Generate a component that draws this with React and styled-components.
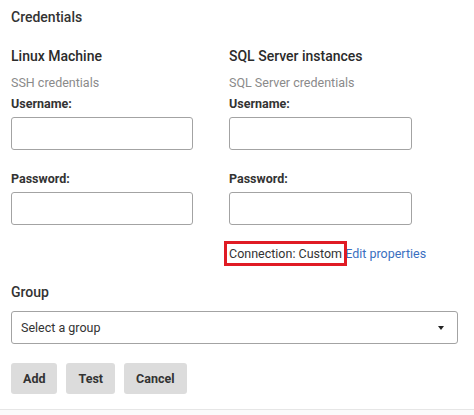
import React from "react";
import styled, { createGlobalStyle } from "styled-components";

const Global = createGlobalStyle`
  html, body { margin: 0; padding: 0; background: #fff; }
  body { font-family: Roboto, "Liberation Sans", Arial, sans-serif; color: #333; }
  * { box-sizing: border-box; }
`;

const Page = styled.div`
  width: 474px;
  height: 415px;
  overflow: hidden;
  display: flex;
  flex-direction: column;
`;

const Content = styled.div`
  padding: 7px 11px 0 11px;
  display: flex;
  flex-direction: column;
`;

const Title = styled.div`
  font-size: 14px;
  font-weight: 500;
  line-height: 20px;
  color: #333;
`;

const Columns = styled.div`
  display: grid;
  grid-template-columns: 182px 183px;
  column-gap: 36px;
  margin-top: 19px;
`;

const Column = styled.div`
  display: flex;
  flex-direction: column;
`;

const Heading = styled.div`
  font-size: 14px;
  font-weight: 500;
  line-height: 20px;
  color: #2b2b2b;
`;

const Sub = styled.div`
  font-size: 12.5px;
  line-height: 16px;
  color: #8a8a8a;
  margin-top: 9px;
`;

const Label = styled.label`
  display: block;
  font-size: 12.5px;
  font-weight: 700;
  line-height: 16px;
  color: #333;
  margin-top: ${(p) => p.$top}px;
`;

const Input = styled.input`
  display: block;
  width: 100%;
  height: 33px;
  margin-top: 5px;
  border: 1px solid #a3a3a3;
  border-radius: 3px;
  background: #fff;
  font: inherit;
  padding: 0 8px;
  outline: none;
`;

const ConnRow = styled.div`
  margin-top: 21px;
  font-size: 12.5px;
  line-height: 16px;
  white-space: nowrap;
`;

const Highlight = styled.span`
  color: #333;
  outline: 3px solid #e01b24;
  outline-offset: 2px;
`;

const Link = styled.a`
  color: #3a6fbf;
  text-decoration: none;
`;

const GroupLabel = styled.div`
  margin-top: 20px;
  font-size: 14px;
  font-weight: 500;
  line-height: 20px;
  color: #333;
`;

const Select = styled.div`
  margin-top: 9px;
  height: 33px;
  width: 447px;
  border: 1px solid #a3a3a3;
  border-radius: 3px;
  display: flex;
  align-items: center;
  justify-content: space-between;
  padding: 0 13px 0 9px;
  font-size: 12.5px;
  color: #333;
`;

const Caret = styled.span`
  width: 0;
  height: 0;
  border-left: 3.5px solid transparent;
  border-right: 3.5px solid transparent;
  border-top: 4px solid #222;
`;

const Buttons = styled.div`
  margin-top: 19px;
  display: flex;
  gap: 9px;
`;

const Button = styled.button`
  height: 31px;
  padding: 0 12px;
  border: none;
  border-radius: 3px;
  background: #dcdcdc;
  font-family: inherit;
  font-size: 12.5px;
  font-weight: 700;
  color: #333;
`;

const Footer = styled.div`
  margin-top: 15px;
  border-top: 1px solid #e6e6e6;
  flex: 1;
  background: #fbfbfb;
`;

export default function App() {
  return (
    <>
      <Global />
      <Page>
        <Content>
          <Title>Credentials</Title>
          <Columns>
            <Column>
              <Heading>Linux Machine</Heading>
              <Sub>SSH credentials</Sub>
              <Label $top={5}>Username:</Label>
              <Input />
              <Label $top={21}>Password:</Label>
              <Input type="password" />
            </Column>
            <Column>
              <Heading>SQL Server instances</Heading>
              <Sub>SQL Server credentials</Sub>
              <Label $top={5}>Username:</Label>
              <Input />
              <Label $top={21}>Password:</Label>
              <Input type="password" />
              <ConnRow>
                <Highlight>Connection: Custom</Highlight>{" "}
                <Link href="#">Edit properties</Link>
              </ConnRow>
            </Column>
          </Columns>
          <GroupLabel>Group</GroupLabel>
          <Select>
            <span>Select a group</span>
            <Caret />
          </Select>
          <Buttons>
            <Button>Add</Button>
            <Button>Test</Button>
            <Button>Cancel</Button>
          </Buttons>
        </Content>
        <Footer />
      </Page>
    </>
  );
}
